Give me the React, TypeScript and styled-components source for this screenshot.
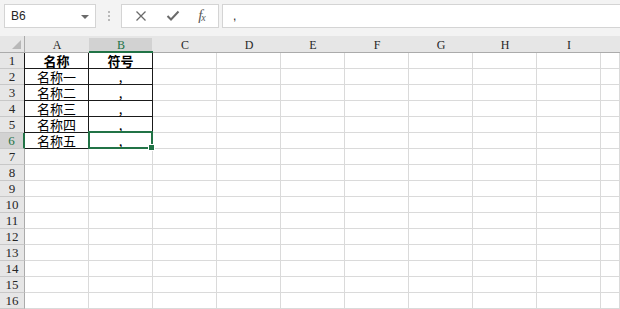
import React from "react";
import styled, { createGlobalStyle } from "styled-components";

const GlobalStyle = createGlobalStyle`
  html, body {
    margin: 0;
    padding: 0;
    background: #ffffff;
    overflow: hidden;
  }
  * {
    box-sizing: border-box;
  }
`;

const Page = styled.div`
  width: 620px;
  height: 309px;
  overflow: hidden;
  background: #ffffff;
`;

const FormulaBar = styled.div`
  height: 36px;
  background: #f3f3f3;
  display: flex;
  align-items: flex-start;
  padding: 4px 0 0 4px;
`;

const NameBox = styled.div`
  width: 92px;
  height: 24px;
  background: #ffffff;
  border: 1px solid #d4d4d4;
  display: flex;
  align-items: center;
  justify-content: space-between;
  padding: 0 6px 0 6px;
  font-family: "Liberation Sans", Arial, sans-serif;
  font-size: 12px;
  color: #262626;
`;

const Caret = styled.span`
  width: 0;
  height: 0;
  border-left: 4px solid transparent;
  border-right: 4px solid transparent;
  border-top: 4px solid #6a6a6a;
  margin-top: 1px;
`;

const Grip = styled.div`
  width: 25px;
  height: 24px;
  display: flex;
  flex-direction: column;
  align-items: center;
  justify-content: center;
  gap: 2px;
  span {
    width: 2px;
    height: 2px;
    background: #b9b9b9;
  }
`;

const FxBox = styled.div`
  width: 98px;
  height: 24px;
  background: #ffffff;
  border: 1px solid #d4d4d4;
  display: flex;
  align-items: center;
  justify-content: space-around;
  padding: 0 4px;
  color: #6a6a6a;
`;

const FxLabel = styled.span`
  font-family: "Liberation Serif", "Times New Roman", serif;
  font-style: italic;
  font-size: 15px;
  line-height: 1;
  color: #5a5a5a;
  letter-spacing: -1px;
  margin-top: -2px;
  sub {
    font-size: 10px;
    vertical-align: -1px;
  }
`;

const Input = styled.div`
  flex: 1;
  height: 24px;
  margin-left: 3px;
  background: #ffffff;
  border: 1px solid #d4d4d4;
  border-right: none;
  padding-left: 10px;
  display: flex;
  align-items: center;
  font-family: "Liberation Sans", Arial, sans-serif;
  font-size: 12px;
  color: #262626;
`;

const Sheet = styled.div`
  display: grid;
  grid-template-columns: 25px repeat(9, 64px) 1fr;
  grid-template-rows: 17px repeat(16, 16px);
`;

const Corner = styled.div`
  background: #e6e6e6;
  border-right: 1px solid #ababab;
  border-bottom: 1px solid #ababab;
  position: relative;
  &::after {
    content: "";
    position: absolute;
    right: 3px;
    bottom: 3px;
    width: 0;
    height: 0;
    border-left: 9px solid transparent;
    border-bottom: 9px solid #b8b8b8;
  }
`;

const ColHead = styled.div<{ $active?: boolean }>`
  background: ${(p) => (p.$active ? "#d2d2d2" : "#e6e6e6")};
  border-bottom: ${(p) => (p.$active ? "2px solid #217346" : "1px solid #ababab")};
  box-shadow: inset -1px 2px 0 #e6e6e6, inset -1px 0 0 #c8c8c8;
  display: flex;
  align-items: center;
  justify-content: center;
  padding-top: 3px;
  font-family: "Liberation Serif", "Times New Roman", serif;
  font-size: 12px;
  color: ${(p) => (p.$active ? "#217346" : "#262626")};
`;

const RowHead = styled.div<{ $active?: boolean }>`
  background: ${(p) => (p.$active ? "#d2d2d2" : "#e6e6e6")};
  border-right: ${(p) => (p.$active ? "2px solid #217346" : "1px solid #ababab")};
  border-bottom: 1px solid #c8c8c8;
  display: flex;
  align-items: center;
  justify-content: center;
  font-family: "Liberation Serif", "Times New Roman", serif;
  font-size: 13px;
  line-height: 1;
  color: ${(p) => (p.$active ? "#217346" : "#262626")};
`;

const Cell = styled.div<{ $boxed?: boolean; $bold?: boolean; $leftEdge?: boolean }>`
  position: relative;
  border-right: 1px solid ${(p) => (p.$boxed ? "#1a1a1a" : "#dadada")};
  border-bottom: 1px solid ${(p) => (p.$boxed ? "#1a1a1a" : "#dadada")};
  box-shadow: ${(p) => (p.$leftEdge ? "-1px 0 0 #1a1a1a" : "none")};
  display: flex;
  align-items: center;
  justify-content: center;
  font-family: "Noto Sans CJK SC", "Liberation Sans", sans-serif;
  font-size: 13px;
  line-height: 1;
  font-weight: ${(p) => (p.$bold ? 700 : 400)};
  color: #000000;
  white-space: nowrap;
`;

const Selection = styled.div`
  position: absolute;
  left: -1px;
  top: -2px;
  right: -1px;
  bottom: -1px;
  border: 2px solid #217346;
  pointer-events: none;
  z-index: 2;
  &::after {
    content: "";
    position: absolute;
    right: -4px;
    bottom: -4px;
    width: 5px;
    height: 5px;
    background: #217346;
    border: 1px solid #ffffff;
  }
`;

const columns = ["A", "B", "C", "D", "E", "F", "G", "H", "I", ""];

const data: Record<number, [string, string]> = {
  1: ["名称", "符号"],
  2: ["名称一", ","],
  3: ["名称二", ","],
  4: ["名称三", ","],
  5: ["名称四", ","],
  6: ["名称五", ","],
};

const CrossIcon = () => (
  <svg width="12" height="12" viewBox="0 0 12 12">
    <path d="M1.5 1.5 L10.5 10.5 M10.5 1.5 L1.5 10.5" stroke="#6a6a6a" strokeWidth="1.3" fill="none" />
  </svg>
);

const CheckIcon = () => (
  <svg width="14" height="12" viewBox="0 0 14 12">
    <path d="M1.5 6 L5 9.5 L12.5 1.5" stroke="#6a6a6a" strokeWidth="2" fill="none" />
  </svg>
);

const App = (): React.ReactElement => (
  <Page>
    <GlobalStyle />
    <FormulaBar>
      <NameBox>
        B6
        <Caret />
      </NameBox>
      <Grip>
        <span />
        <span />
        <span />
      </Grip>
      <FxBox>
        <CrossIcon />
        <CheckIcon />
        <FxLabel>
          f<sub>x</sub>
        </FxLabel>
      </FxBox>
      <Input>,</Input>
    </FormulaBar>
    <Sheet>
      <Corner />
      {columns.map((c, i) => (
        <ColHead key={i} $active={c === "B"}>
          {c}
        </ColHead>
      ))}
      {Array.from({ length: 16 }, (_, r) => {
        const row = r + 1;
        const values = data[row];
        return (
          <React.Fragment key={row}>
            <RowHead $active={row === 6}>{row}</RowHead>
            {columns.map((c, i) => {
              const boxed = !!values && i < 2;
              return (
                <Cell key={c + i} $boxed={boxed} $bold={row === 1} $leftEdge={boxed && i === 0 && row !== 6}>
                  {values && i < 2 ? values[i] : ""}
                  {row === 6 && c === "B" && <Selection />}
                </Cell>
              );
            })}
          </React.Fragment>
        );
      })}
    </Sheet>
  </Page>
);

export default App;
